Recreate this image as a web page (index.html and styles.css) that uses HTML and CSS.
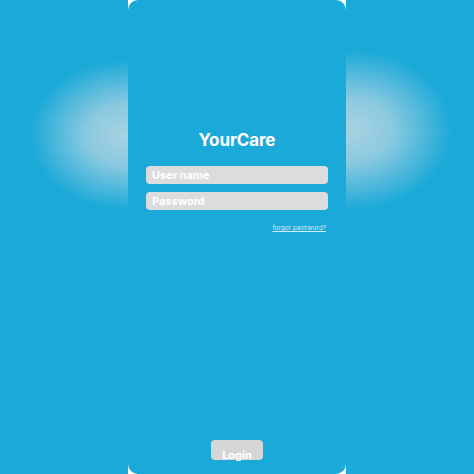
FILE: index.html
```html
<!DOCTYPE html>
<html>
<head>
<meta charset="utf-8">
<link rel="stylesheet" href="styles.css">
</head>
<body>
<div class="stage">
  <div class="frame">
    <div class="screen">
      <h1 class="title">YourCare</h1>
      <div class="field">User name</div>
      <div class="field">Password</div>
      <div class="forgot-row"><a class="forgot" href="#">forgot password?</a></div>
      <div class="spacer"></div>
      <div class="login-row"><div class="login"><span>Login</span></div></div>
    </div>
  </div>
</div>
</body>
</html>
```
FILE: styles.css
```css
html, body {
  margin: 0;
  padding: 0;
  width: 474px;
  height: 474px;
  overflow: hidden;
}
body {
  font-family: Inter, "Liberation Sans", sans-serif;
  background-color: #1ba9d8;
  background-image:
    radial-gradient(ellipse 95px 75px at 125px 135px, rgba(176,212,226,0.95) 0%, rgba(176,212,226,0.75) 40%, rgba(27,169,216,0) 100%),
    radial-gradient(ellipse 100px 80px at 352px 130px, rgba(176,212,226,0.95) 0%, rgba(176,212,226,0.75) 40%, rgba(27,169,216,0) 100%);
}
.stage {
  display: flex;
  justify-content: center;
  width: 474px;
  height: 474px;
}
.frame {
  width: 218px;
  height: 474px;
  background: #ffffff;
}
.screen {
  box-sizing: border-box;
  width: 218px;
  height: 474px;
  background: #1aa9d8;
  border-radius: 10px;
  display: flex;
  flex-direction: column;
  padding: 129px 18px 0 18px;
}
.title {
  margin: 0 0 15px 0;
  text-align: center;
  color: #ffffff;
  font-size: 17px;
  font-weight: 700;
  line-height: 22px;
  letter-spacing: -0.1px;
}
.field {
  height: 18px;
  margin-bottom: 8px;
  background: #dcdcdc;
  border-radius: 4px;
  color: #ffffff;
  font-weight: 700;
  font-size: 11px;
  line-height: 18px;
  padding-left: 6px;
}
.forgot-row {
  display: flex;
  justify-content: flex-end;
  padding-right: 2px;
  margin-top: 5px;
}
.forgot {
  color: #d6ecf5;
  font-size: 6.5px;
  line-height: 10px;
  text-decoration: underline;
}
.spacer {
  flex: 1;
}
.login-row {
  display: flex;
  justify-content: center;
  margin-bottom: 14px;
}
.login {
  width: 52px;
  height: 20px;
  background: #d6d6d6;
  border-radius: 4px;
  position: relative;
}
.login span {
  position: absolute;
  left: 0;
  right: 0;
  top: 8px;
  text-align: center;
  color: #ffffff;
  font-weight: 700;
  font-size: 11px;
  line-height: 14px;
}
```
